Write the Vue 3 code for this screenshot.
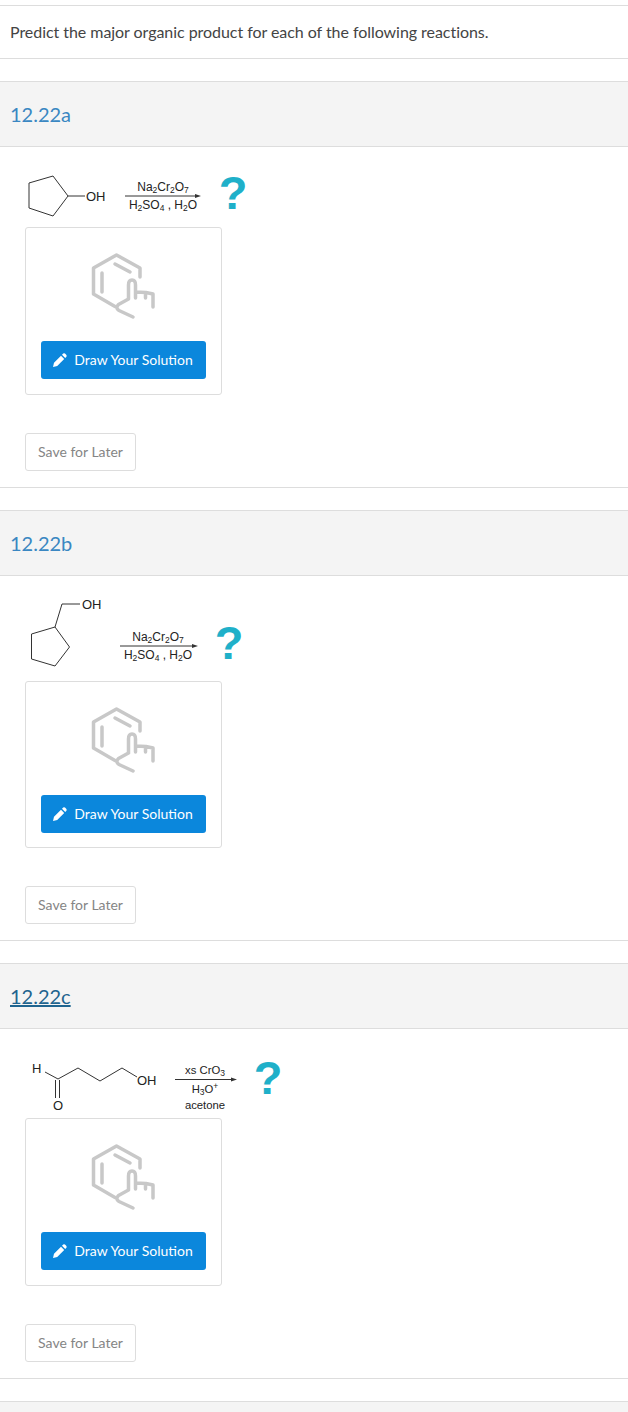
<template>
  <div class="page">
    <p class="intro">Predict the major organic product for each of the following reactions.</p>

    <section v-for="part in parts" :key="part.id" class="part">
      <h2 class="part-head">
        <a href="#" class="part-link" :class="{ visited: part.id === 'c' }">12.22{{ part.id }}</a>
      </h2>

      <svg class="scheme" width="300" :height="part.height" :viewBox="`0 ${part.top} 300 ${part.height}`">
        <path :d="part.bonds" class="bond" />
        <path :d="part.arrow" class="arrow-head" />

        <!-- 12.22a -->
        <g v-if="part.id === 'a'" class="chem">
          <text x="86" y="200.500">OH</text>
          <text x="163" y="191" text-anchor="middle" class="reagent">Na<tspan class="sub" dy="2">2</tspan><tspan dy="-2">Cr</tspan><tspan class="sub" dy="2">2</tspan><tspan dy="-2">O</tspan><tspan class="sub" dy="2">7</tspan></text>
          <text x="163" y="209" text-anchor="middle" class="reagent">H<tspan class="sub" dy="2">2</tspan><tspan dy="-2">SO</tspan><tspan class="sub" dy="2">4</tspan><tspan dy="-2"> , H</tspan><tspan class="sub" dy="2">2</tspan><tspan dy="-2">O</tspan></text>
          <text x="233" y="209" text-anchor="middle" class="unknown">?</text>
        </g>

        <!-- 12.22b -->
        <g v-if="part.id === 'b'" class="chem">
          <text x="82" y="608.500">OH</text>
          <text x="158" y="641" text-anchor="middle" class="reagent">Na<tspan class="sub" dy="2">2</tspan><tspan dy="-2">Cr</tspan><tspan class="sub" dy="2">2</tspan><tspan dy="-2">O</tspan><tspan class="sub" dy="2">7</tspan></text>
          <text x="158" y="659" text-anchor="middle" class="reagent">H<tspan class="sub" dy="2">2</tspan><tspan dy="-2">SO</tspan><tspan class="sub" dy="2">4</tspan><tspan dy="-2"> , H</tspan><tspan class="sub" dy="2">2</tspan><tspan dy="-2">O</tspan></text>
          <text x="229" y="659" text-anchor="middle" class="unknown">?</text>
        </g>

        <!-- 12.22c -->
        <g v-if="part.id === 'c'" class="chem">
          <text x="32" y="1073" class="atom">H</text>
          <text x="53" y="1110" class="atom">O</text>
          <text x="137" y="1084.500">OH</text>
          <text x="205" y="1074" text-anchor="middle" class="reagent small">xs CrO<tspan class="sub" dy="2">3</tspan></text>
          <text x="205" y="1093" text-anchor="middle" class="reagent small">H<tspan class="sub" dy="2">3</tspan><tspan dy="-2">O</tspan><tspan class="sub" dy="-4">+</tspan></text>
          <text x="205" y="1109" text-anchor="middle" class="reagent small">acetone</text>
          <text x="268" y="1094" text-anchor="middle" class="unknown">?</text>
        </g>
      </svg>

      <div class="answer">
        <div class="draw-card" :class="{ short: part.id === 'b' }">
          <svg class="draw-icon" width="91" height="80" viewBox="78 245 91 80">
            <path d="M140 277V268L116.500 255L93.500 268V294L115 306.500" />
            <path d="M102 273V292M115 264L130 272" />
            <path d="M128.500 299V285Q128.500 280 132 280Q135.500 280 135.500 285V298M135.500 292L146 292.500L153 294V307M145.500 293V298M128.500 299L118.500 304.500Q115 308 119 310.500L133 317" />
          </svg>
          <button class="draw-btn" type="button">
            <svg width="14" height="14" viewBox="0 0 14 14">
              <path d="M0 14L1 9.800L8 2.800L11.200 6L4.200 13ZM9 1.800L10.200 .6Q11 0 12 .6L13.400 2Q14 3 13.400 3.800L12.200 5Z" fill="#fff" />
            </svg>
            Draw Your Solution
          </button>
        </div>
        <button class="save-btn" type="button">Save for Later</button>
      </div>
    </section>

    <div class="part-head last"></div>
  </div>
</template>

<script setup>
const parts = [
  {
    id: 'a',
    top: 147,
    height: 80,
    bonds: 'M29 183L53 176L68 196L53 216L29 208ZM68 196H85M125 196H197',
    arrow: 'M195 194L201 196L195 198Z',
  },
  {
    id: 'b',
    top: 576,
    height: 105,
    bonds: 'M55 627L69.500 647L55 666L31.500 659V634ZM55 627L62 604H80M120 646H194',
    arrow: 'M192 644L198 646L192 648Z',
  },
  {
    id: 'c',
    top: 1029,
    height: 89,
    bonds: 'M45 1072L58 1079L78 1068L100 1081L122 1068L137 1077M55.500 1080V1098M59.500 1080V1098M175 1079.500H233',
    arrow: 'M231 1077.500L237 1079.500L231 1081.500Z',
  },
]
</script>

<style scoped>
.page {
  font-family: Lato, "Open Sans", sans-serif;
  padding-top: 5px;
  background: #fff;
}

.intro {
  margin: 0;
  height: 52px;
  padding-left: 10px;
  border-top: 1px solid #ddd;
  border-bottom: 1px solid #ddd;
  font-size: 16px;
  letter-spacing: -0.05px;
  line-height: 52px;
  color: #444;
}

.part-head {
  margin: 22px 0 0;
  height: 64px;
  padding-left: 10px;
  border-top: 1px solid #ddd;
  border-bottom: 1px solid #ddd;
  background: #f4f4f4;
  font-size: 20px;
  font-weight: 400;
  line-height: 64px;
}

.part-head.last {
  height: 10px;
  border-bottom: 0;
}

.part-link {
  color: #3a87c2;
  text-decoration: none;
}

.part-link.visited {
  color: #1f648f;
  text-decoration: underline;
}

.scheme {
  display: block;
}

.bond {
  fill: none;
  stroke: #333;
  stroke-width: 1;
}

.arrow-head {
  fill: #333;
}

.chem text {
  font-family: "Liberation Sans", Arial, sans-serif;
  font-size: 13px;
  fill: #222;
}

.chem .reagent {
  font-size: 12px;
}

.chem .reagent.small {
  font-size: 11.300px;
}

.chem .sub {
  font-size: 8.500px;
}

.chem .unknown {
  font-size: 47px;
  font-weight: 700;
  fill: #1fb0c9;
}

.answer {
  padding: 0 0 16px 25px;
  border-bottom: 1px solid #ddd;
}

.draw-card {
  width: 197px;
  height: 168px;
  box-sizing: border-box;
  padding: 17px 15px 0;
  border: 1px solid #ddd;
  border-radius: 3px;
}

.draw-card.short {
  height: 167px;
}

.draw-icon {
  display: block;
  margin: 0 auto 16px;
  fill: none;
  stroke: #c8c8c8;
  stroke-width: 3.500;
  stroke-linecap: round;
  stroke-linejoin: round;
}

.draw-btn {
  display: flex;
  align-items: center;
  justify-content: center;
  gap: 7px;
  width: 165px;
  height: 38px;
  padding: 0 1px 2px 0;
  border: 0;
  border-radius: 3px;
  background: #0b87dc;
  font-family: inherit;
  font-size: 14px;
  color: #fff;
}

.draw-btn svg {
  margin-top: 2px;
}

.save-btn {
  display: block;
  margin-top: 38px;
  width: 111px;
  height: 38px;
  padding: 0 0 2px;
  border: 1px solid #ddd;
  border-radius: 3px;
  background: #fff;
  font-family: inherit;
  font-size: 14px;
  color: #858585;
}
</style>
